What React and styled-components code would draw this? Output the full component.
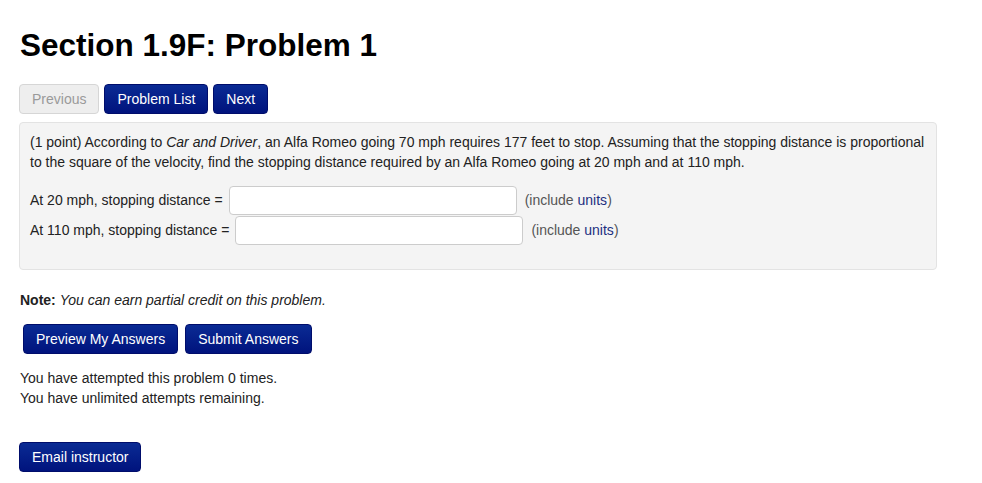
import React from "react";
import styled, { createGlobalStyle } from "styled-components";

const Global = createGlobalStyle`
  html, body { margin: 0; padding: 0; background: #fff; }
  body {
    font-family: "Liberation Sans", Arial, sans-serif;
    font-size: 14px;
    line-height: 20px;
    color: #222;
  }
`;

const Page = styled.div`
  padding: 0 20px 0 19px;
  width: 918px;
`;

const Title = styled.h1`
  margin: 25px 0 0 1px;
  font-size: 31.5px;
  line-height: 40px;
  font-weight: bold;
  color: #000;
`;

const NavBar = styled.div`
  display: flex;
  gap: 5px;
  margin-top: 19px;
`;

const Button = styled.button`
  font-family: "Liberation Sans", Arial, sans-serif;
  font-size: 14px;
  line-height: 20px;
  padding: 4px 12px;
  border-radius: 4px;
  border: 1px solid ${(p) => (p.disabled ? "#d6d6d6" : "#000d6b")};
  background: ${(p) =>
    p.disabled ? "#eeeeee" : "linear-gradient(to bottom, #0a2b94, #00137d)"};
  color: ${(p) => (p.disabled ? "#9a9a9a" : "#fff")};
  cursor: ${(p) => (p.disabled ? "default" : "pointer")};
  white-space: nowrap;
`;

const ProblemBox = styled.div`
  margin-top: 8px;
  background: #f4f4f4;
  border: 1px solid #e3e3e3;
  border-radius: 4px;
  padding: 9px 10px 24px;
`;

const Statement = styled.p`
  margin: 0 0 13px;
`;

const AnswerRow = styled.div`
  display: flex;
  align-items: center;
  height: 30px;
`;

const Label = styled.span`
  white-space: pre;
`;

const AnswerInput = styled.input`
  width: 288px;
  height: 29px;
  box-sizing: border-box;
  margin: 0 8px 0 6px;
  border: 1px solid #cccccc;
  border-radius: 4px;
  background: #fff;
  font-family: "Liberation Sans", Arial, sans-serif;
  font-size: 14px;
  padding: 4px 6px;
`;

const Hint = styled.span`
  color: #555;
`;

const UnitsLink = styled.a`
  color: #1d2f80;
  text-decoration: none;
`;

const Note = styled.p`
  margin: 20px 0 0 1px;
`;

const SubmitBar = styled.div`
  display: flex;
  gap: 7px;
  margin: 14px 0 0 4px;
`;

const Info = styled.div`
  margin: 14px 0 0 1px;
`;

const Footer = styled.div`
  margin-top: 34px;
`;

export default function App() {
  return (
    <>
      <Global />
      <Page>
        <Title>Section 1.9F: Problem 1</Title>
        <NavBar>
          <Button disabled>Previous</Button>
          <Button>Problem List</Button>
          <Button>Next</Button>
        </NavBar>
        <ProblemBox>
          <Statement>
            (1 point) According to <i>Car and Driver</i>, an Alfa Romeo going 70
            mph requires 177 feet to stop. Assuming that the stopping distance is
            proportional to the square of the velocity, find the stopping
            distance required by an Alfa Romeo going at 20 mph and at 110 mph.
          </Statement>
          <AnswerRow>
            <Label>At 20 mph, stopping distance =</Label>
            <AnswerInput type="text" />
            <Hint>
              (include <UnitsLink href="#">units</UnitsLink>)
            </Hint>
          </AnswerRow>
          <AnswerRow>
            <Label>At 110 mph, stopping distance =</Label>
            <AnswerInput type="text" />
            <Hint>
              (include <UnitsLink href="#">units</UnitsLink>)
            </Hint>
          </AnswerRow>
        </ProblemBox>
        <Note>
          <b>Note:</b> <i>You can earn partial credit on this problem.</i>
        </Note>
        <SubmitBar>
          <Button>Preview My Answers</Button>
          <Button>Submit Answers</Button>
        </SubmitBar>
        <Info>
          You have attempted this problem 0 times.
          <br />
          You have unlimited attempts remaining.
        </Info>
        <Footer>
          <Button>Email instructor</Button>
        </Footer>
      </Page>
    </>
  );
}
